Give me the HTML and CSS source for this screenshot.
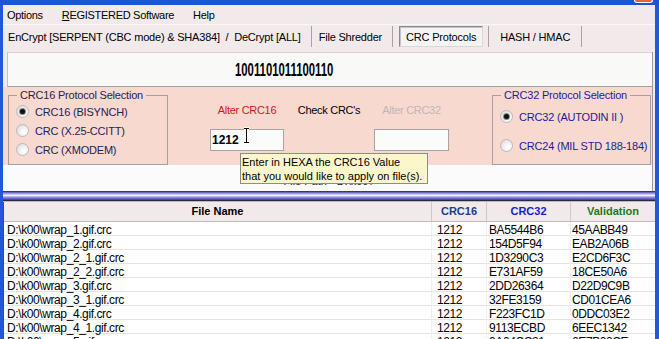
FILE: index.html
```html
<!DOCTYPE html>
<html>
<head>
<meta charset="utf-8">
<link rel="stylesheet" href="styles.css">
</head>
<body>
<div class="titlebar"><span class="closebtn"></span></div>
<div class="win">
  <div class="menubar">
    <span class="menu">Options</span>
    <span class="menu"><u>R</u>EGISTERED Software</span>
    <span class="menu">Help</span>
  </div>
  <div class="tabs">
    <div class="tab t1">EnCrypt [SERPENT (CBC mode) &amp; SHA384]&nbsp; / &nbsp;DeCrypt [ALL]</div>
    <div class="tab t2">File Shredder</div>
    <div class="tab t3"><span class="tabsel">CRC Protocols</span></div>
    <div class="tab t4">HASH / HMAC</div>
  </div>
  <div class="upper">
    <div class="binpanel"><span class="bin">1001101011100110</span></div>
    <div class="crcpanel">
      <fieldset class="group g16">
        <legend>CRC16 Protocol Selection</legend>
        <div class="radio"><span class="dot on"></span>CRC16 (BISYNCH)</div>
        <div class="radio"><span class="dot"></span>CRC (X.25-CCITT)</div>
        <div class="radio"><span class="dot"></span>CRC (XMODEM)</div>
      </fieldset>
      <div class="mid">
        <span class="lbl red">Alter CRC16</span>
        <span class="lbl">Check CRC's</span>
        <span class="lbl dim">Alter CRC32</span>
        <div class="input"><b>1212</b>
          <svg class="ibeam" width="7" height="17" viewBox="0 0 7 17"><path d="M1 1.5H6M3.5 1.5V15.5M1 15.5H6" stroke="#fff" stroke-width="3" fill="none"/><path d="M1 1.5H6M3.5 1.5V15.5M1 15.5H6" stroke="#000" stroke-width="1" fill="none"/></svg>
        </div>
        <span></span>
        <div class="input"></div>
        <div class="tooltip">Enter in HEXA the CRC16 Value<br>that you would like to apply on file(s).</div>
      </div>
      <fieldset class="group g32">
        <legend>CRC32 Protocol Selection</legend>
        <div class="radio"><span class="dot on"></span>CRC32 (AUTODIN II )</div>
        <div class="radio"><span class="dot"></span>CRC24 (MIL STD 188-184)</div>
      </fieldset>
    </div>
    <div class="pathpanel">File Path - D:\k00\</div>
  </div>
  <div class="splitter"></div>
  <div class="list">
    <div class="row head">
      <span class="c1">File Name</span>
      <span class="c2">CRC16</span>
      <span class="c3">CRC32</span>
      <span class="c4">Validation</span>
    </div>
    <div class="row"><span class="c1">D:\k00\wrap_1.gif.crc</span><span class="c2">1212</span><span class="c3">BA5544B6</span><span class="c4">45AABB49</span></div>
    <div class="row"><span class="c1">D:\k00\wrap_2.gif.crc</span><span class="c2">1212</span><span class="c3">154D5F94</span><span class="c4">EAB2A06B</span></div>
    <div class="row"><span class="c1">D:\k00\wrap_2_1.gif.crc</span><span class="c2">1212</span><span class="c3">1D3290C3</span><span class="c4">E2CD6F3C</span></div>
    <div class="row"><span class="c1">D:\k00\wrap_2_2.gif.crc</span><span class="c2">1212</span><span class="c3">E731AF59</span><span class="c4">18CE50A6</span></div>
    <div class="row"><span class="c1">D:\k00\wrap_3.gif.crc</span><span class="c2">1212</span><span class="c3">2DD26364</span><span class="c4">D22D9C9B</span></div>
    <div class="row"><span class="c1">D:\k00\wrap_3_1.gif.crc</span><span class="c2">1212</span><span class="c3">32FE3159</span><span class="c4">CD01CEA6</span></div>
    <div class="row"><span class="c1">D:\k00\wrap_4.gif.crc</span><span class="c2">1212</span><span class="c3">F223FC1D</span><span class="c4">0DDC03E2</span></div>
    <div class="row"><span class="c1">D:\k00\wrap_4_1.gif.crc</span><span class="c2">1212</span><span class="c3">9113ECBD</span><span class="c4">6EEC1342</span></div>
    <div class="row"><span class="c1">D:\k00\wrap_5.gif.crc</span><span class="c2">1212</span><span class="c3">9A04CC21</span><span class="c4">6E7B02CE</span></div>
  </div>
</div>
</body>
</html>
```

FILE: styles.css
```css
* { box-sizing: border-box; }
html, body { margin: 0; padding: 0; }
body {
  width: 659px; height: 339px; overflow: hidden;
  background: #2257d8;
  font-family: "Liberation Sans", Arial, sans-serif;
  font-size: 11px; color: #000;
}
.titlebar { height: 5px; background: #1f52d4; position: relative; }
.closebtn {
  position: absolute; right: 6px; top: 0; width: 19px; height: 3px;
  background: #e2643c; border: 1px solid #fff; border-top: 0; border-radius: 0 0 3px 3px;
}
.win {
  margin: 0 4px 0 3px; height: 334px; background: #f2eaea;
  display: flex; flex-direction: column; overflow: hidden;
}
.menubar {
  height: 20px; flex: none; display: flex; align-items: center; gap: 19px;
  padding-left: 4px; letter-spacing: -0.3px; border-bottom: 1px solid #fbf8f8;
}
.menu u { text-decoration: underline; }
.tabs { height: 27px; flex: none; display: flex; align-items: flex-start; padding-top: 1px; letter-spacing: -0.2px; }
.tab { height: 21px; display: flex; align-items: center; border-right: 1px solid #aaa2a2; white-space: nowrap; }
.t1 { padding: 0 10px 0 5px; }
.t2 { padding: 0 10px 0 7px; }
.t3 { padding: 0 5px 0 6px; }
.t4 { padding: 0 11px; }
.tabsel {
  height: 21px; display: flex; align-items: center; padding: 0 6px;
  border: 1px solid #8a8a8a; border-right-color: #d8d8d8; border-bottom-color: #d8d8d8;
  background: #f5f4f4; box-shadow: inset 1px 1px 0 #c4c4c4;
}
.upper { flex: none; margin-right: 2px; border-right: 1px solid #a09898; }
.binpanel {
  margin-left: 4px; height: 35px; display: flex; align-items: center;
  padding-left: 227px; background: #f9f9f7;
  border-top: 1px solid #dcd4d4; border-left: 1px solid #c8c0c0; border-bottom: 1px solid #a0a0a0;
}
.bin {
  display: inline-block; font-weight: bold; font-size: 18px; line-height: 18px;
  transform: scaleX(0.63); transform-origin: left center; color: #000;
}
.crcpanel {
  height: 78px; background: #f8d9d0; display: flex; align-items: flex-start;
  padding: 2px 1px 0 5px;
}
.group {
  margin: 0; padding: 0; height: 76px; border: 1px solid #a8a0a0;
  letter-spacing: -0.2px; min-width: 0;
}
.group legend { padding: 0 3px; margin-left: 1px; line-height: 13px; }
.g16 { width: 160px; padding-left: 7px; color: #1c2452; }
.g32 { width: 159px; padding-left: 7px; color: #1c1c96; }
.radio { display: flex; align-items: center; gap: 6px; height: 19px; white-space: nowrap; }
.g32 .radio { height: 29px; }
.dot {
  width: 13px; height: 13px; border-radius: 50%; flex: none;
  border: 1px solid #bdb8b8;
  background: radial-gradient(circle at 65% 65%, #ffffff 0, #f4f4f4 35%, #d6d4d4 100%);
  display: flex; align-items: center; justify-content: center;
}
.dot.on::after { content: ""; width: 5px; height: 5px; border-radius: 50%; background: #111; box-shadow: 0 0 0 1px #888; }
.mid {
  flex: 1; position: relative; display: grid;
  grid-template-columns: 74px 90px 75px; grid-template-rows: 14px 22px; row-gap: 12px;
  padding: 14px 0 0 42px; letter-spacing: -0.3px;
}
.lbl { justify-self: center; line-height: 14px; white-space: nowrap; }
.red { color: #d01818; }
.dim { color: #beb6b6; }
.input {
  position: relative; height: 22px; border: 1px solid #a8a4a4; background: #fbfbfa;
  padding-left: 1px; line-height: 20px; font-size: 12px; letter-spacing: 0;
}
.ibeam { position: absolute; left: 32px; top: -3px; }
.tooltip {
  position: absolute; left: 72px; top: 64px; z-index: 2; width: 188px; height: 31px;
  background: #fbf7cb; border: 1px solid #8c8c8c; padding: 1px 0 0 1px;
  line-height: 14px; letter-spacing: 0; white-space: nowrap;
}
.pathpanel {
  height: 26px; background: #fbfbfb; text-align: center; padding-top: 9px; line-height: 14px;
  color: #202020;
}
.splitter {
  height: 11px; flex: none;
  background: linear-gradient(to bottom,
    #3c3c48 0, #3c3c48 1px,
    #6a6ac4 1px, #6a6ac4 2px,
    #9a9ae6 2px, #9a9ae6 3px,
    #c6c6f6 3px, #c6c6f6 4px,
    #f4f4ff 4px, #f4f4ff 5px,
    #b4b4ee 5px, #b4b4ee 6px,
    #8c8ce0 6px, #8c8ce0 7px,
    #6666c8 7px, #6666c8 8px,
    #4a4aa4 8px, #4a4aa4 9px,
    #2a2a38 9px, #2a2a38 10px,
    #bcb8c0 10px, #bcb8c0 11px);
}
.list { flex: 1; background: #fff; border-left: 1px solid #4a4a5a; }
.row {
  display: grid; grid-template-columns: 428px 55px 84px 84px;
  height: 14px; border-bottom: 1px solid #e4e4e4;
  font-size: 12px; letter-spacing: -0.4px; line-height: 13px; white-space: nowrap;
}
.row span { border-right: 1px solid #eeeeee; padding-top: 2px; overflow: visible; }
.row .c1 { padding-left: 3px; }
.row .c2 { padding-left: 5px; }
.row .c3 { padding-left: 2px; }
.row .c4 { padding-left: 1px; border-right: 0; }
.row.head {
  height: 20px; background: #f2eaea; border-bottom: 1px solid #c4bcbc;
  font-size: 11px; font-weight: bold; letter-spacing: 0;
}
.row.head span {
  padding: 0; display: flex; align-items: center; justify-content: center;
  border-right: 1px solid #d0c8c8;
}
.row.head .c2 { color: #1a3c8c; }
.row.head .c3 { color: #1c1cc8; }
.row.head .c4 { color: #1a7a1a; border-right: 0; }
```
